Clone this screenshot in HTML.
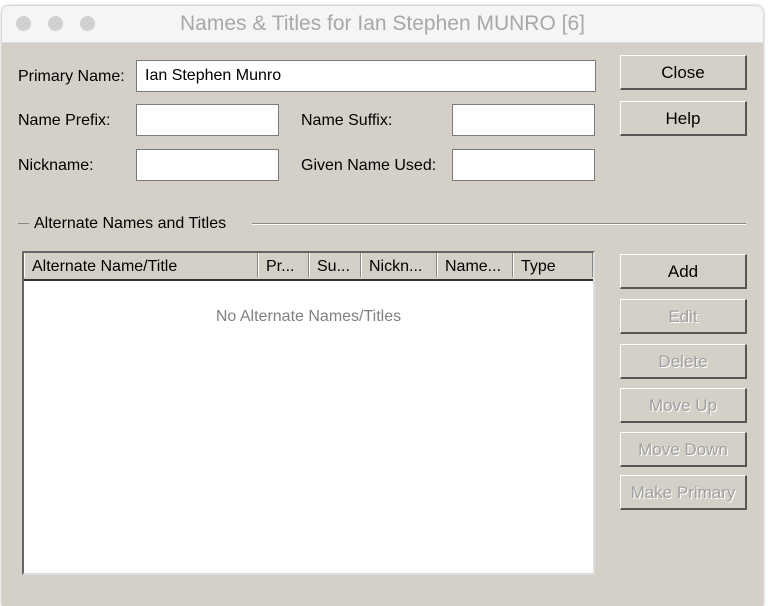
<!DOCTYPE html>
<html><head><style>
body{margin:0;width:768px;height:597px;background:#fff;position:relative;overflow:hidden;font-family:"Liberation Sans",sans-serif;font-size:16px;color:#000}
.win{position:absolute;left:2px;top:6px;width:761px;height:600px;background:#d4d0c8;border-radius:6px 6px 0 0;overflow:hidden;box-shadow:0 0 3px rgba(0,0,0,.4)}
.title{height:36px;background:#f5f5f5;border-bottom:1px solid #ddd;position:relative}
.title .t{position:absolute;left:0;right:0;top:6px;text-align:center;font-size:21px;color:#a8a8a8}
.dot{position:absolute;top:10px;width:15px;height:15px;border-radius:50%;background:#d0d0d0}
.a{position:absolute}
.inp{position:absolute;background:#fff;border:1px solid #7a7a7a;box-sizing:border-box}
.btn{position:absolute;left:618px;width:127px;height:35px;box-sizing:border-box;border:1px solid #fff;border-right:2px solid #555;border-bottom:2px solid #555;text-align:center;line-height:34px;font-size:17px;background:#d4d0c8}
.dis{color:#a0a0a0;text-shadow:1px 1px 0 #fff}
.hd{position:absolute;top:0;height:24px;border-right:1px solid #888;box-sizing:border-box;line-height:28px;padding-left:7px;font-size:16px;white-space:nowrap;border-left:1px solid #fff;overflow:hidden}
</style></head><body>
<div class="win">
<div class="title"><div class="dot" style="left:14px"></div><div class="dot" style="left:46px"></div><div class="dot" style="left:78px"></div><div class="t">Names &amp; Titles for Ian Stephen MUNRO [6]</div></div>
<div class="a" style="left:16px;top:62px">Primary Name:</div>
<div class="inp" style="left:134px;top:54px;width:460px;height:32px;padding:6px 8px">Ian Stephen Munro</div>
<div class="a" style="left:16px;top:106px">Name Prefix:</div>
<div class="inp" style="left:134px;top:98px;width:143px;height:32px"></div>
<div class="a" style="left:299px;top:106px">Name Suffix:</div>
<div class="inp" style="left:450px;top:98px;width:143px;height:32px"></div>
<div class="a" style="left:16px;top:151px">Nickname:</div>
<div class="inp" style="left:134px;top:143px;width:143px;height:32px"></div>
<div class="a" style="left:299px;top:151px">Given Name Used:</div>
<div class="inp" style="left:450px;top:143px;width:143px;height:32px"></div>
<div class="a" style="left:16px;top:217px;width:11px;border-top:1px solid #888"></div>
<div class="a" style="left:32px;top:209px">Alternate Names and Titles</div>
<div class="a" style="left:250px;top:217px;width:494px;border-top:1px solid #888;border-bottom:1px solid #fff"></div>
<div class="a" style="left:20px;top:245px;width:573px;height:324px;background:#fff;border:2px solid #666;border-right-color:#ddd;border-bottom-color:#ddd;box-sizing:border-box">
<div class="a" style="left:0;top:0;width:569px;height:26px;background:#d4d0c8;border-bottom:2px solid #333">
<div class="hd" style="left:0;width:234px">Alternate Name/Title</div>
<div class="hd" style="left:234px;width:51px">Pr...</div>
<div class="hd" style="left:285px;width:52px">Su...</div>
<div class="hd" style="left:337px;width:76px">Nickn...</div>
<div class="hd" style="left:413px;width:76px">Name...</div>
<div class="hd" style="left:489px;width:80px">Type</div>
</div>
<div class="a" style="left:0;width:569px;top:55px;text-align:center;color:#808080">No Alternate Names/Titles</div>
</div>
<div class="btn" style="top:49px">Close</div>
<div class="btn" style="top:95px">Help</div>
<div class="btn" style="top:248px">Add</div>
<div class="btn dis" style="top:293px">Edit</div>
<div class="btn dis" style="top:338px">Delete</div>
<div class="btn dis" style="top:382px">Move Up</div>
<div class="btn dis" style="top:426px">Move Down</div>
<div class="btn dis" style="top:469px">Make Primary</div>
</div>
</body></html>
